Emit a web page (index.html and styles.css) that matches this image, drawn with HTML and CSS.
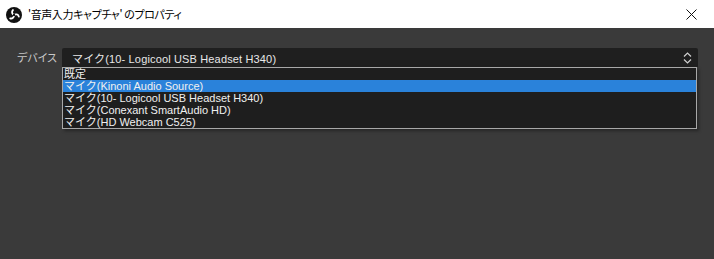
FILE: index.html
```html
<!DOCTYPE html>
<html lang="ja">
<head>
<meta charset="utf-8">
<link rel="stylesheet" href="styles.css">
</head>
<body>
<div class="window">
  <div class="titlebar">
    <svg class="logo" width="16" height="16" viewBox="0 0 16 16">
      <circle cx="8" cy="8" r="8" fill="#111"/>
      <g fill="none" stroke="#fff" stroke-width="1.8" stroke-linecap="round">
        <path d="M8 8 A3 3 0 0 1 7 3"/>
        <path d="M8 8 A3 3 0 0 1 7 3" transform="rotate(120 8 8)"/>
        <path d="M8 8 A3 3 0 0 1 7 3" transform="rotate(240 8 8)"/>
      </g>
      <circle cx="8" cy="8" r="1.2" fill="#111"/>
    </svg>
    <span class="title">'音声入力キャプチャ' のプロパティ</span>
    <span class="close">
      <svg width="11" height="11" viewBox="0 0 11 11"><path d="M0.5 0.5 L10.5 10.5 M10.5 0.5 L0.5 10.5" stroke="#111" stroke-width="1"/></svg>
    </span>
  </div>
  <div class="content">
    <div class="row">
      <span class="label">デバイス</span>
      <div class="combo-wrap">
        <div class="combo">
          <span class="combo-text">マイク(10- Logicool USB Headset H340)</span>
          <svg class="arrows" width="9" height="12" viewBox="0 0 9 12"><path d="M1 4.5 L4.5 1 L8 4.5 M1 7.5 L4.5 11 L8 7.5" fill="none" stroke="#d0d0d0" stroke-width="1.2"/></svg>
        </div>
        <ul class="list">
          <li>既定</li>
          <li class="sel">マイク(Kinoni Audio Source)</li>
          <li>マイク(10- Logicool USB Headset H340)</li>
          <li>マイク(Conexant SmartAudio HD)</li>
          <li>マイク(HD Webcam C525)</li>
        </ul>
      </div>
    </div>
  </div>
</div>
</body>
</html>
```

FILE: styles.css
```css
html, body {
  margin: 0;
  padding: 0;
  height: 100%;
}
body {
  background: #3a3a3a;
  font-family: "Liberation Sans", "Noto Sans CJK JP", sans-serif;
  overflow: hidden;
}
.window {
  display: flex;
  flex-direction: column;
  height: 100%;
}
.titlebar {
  height: 28px;
  background: #ffffff;
  display: flex;
  align-items: center;
  padding-left: 6px;
  box-sizing: border-box;
  flex: none;
}
.logo {
  flex: none;
  margin-top: 1px;
}
.title {
  margin-left: 6px;
  font-family: "Noto Sans CJK JP", sans-serif;
  font-feature-settings: "palt" 1;
  font-size: 11px;
  letter-spacing: -0.4px;
  color: #000;
  white-space: nowrap;
}
.close {
  margin-left: auto;
  width: 46px;
  display: flex;
  justify-content: center;
  align-items: center;
  margin-top: 1px;
}
.content {
  flex: 1;
  background: #3a3a3a;
  padding: 20px 16px 0 17px;
}
.row {
  display: flex;
  align-items: flex-start;
}
.label {
  color: #c8c8c8;
  font-family: "Noto Sans CJK JP", sans-serif;
  font-feature-settings: "palt" 1;
  font-size: 11px;
  line-height: 19px;
  width: 45px;
  flex: none;
  white-space: nowrap;
}
.combo-wrap {
  flex: 1;
  display: flex;
  flex-direction: column;
}
.combo {
  height: 19px;
  background: #1f1f1f;
  border-radius: 2px 2px 0 0;
  display: flex;
  align-items: center;
  padding-left: 10px;
  padding-right: 6px;
}
.combo-text {
  color: #e8e8e8;
  font-size: 11px;
  letter-spacing: 0.15px;
  flex: 1;
  white-space: nowrap;
}
.arrows {
  flex: none;
}
.list {
  margin: 0;
  padding: 0;
  list-style: none;
  background: #1e1e1e;
  border: 1px solid #a8a8a8;
  box-shadow: 2px 2px 3px rgba(0,0,0,0.35);
  margin-right: 1px;
}
.list li {
  height: 12px;
  line-height: 12px;
  font-size: 11px;
  color: #f0f0f0;
  padding-left: 1px;
  white-space: nowrap;
}
.list li.sel {
  background: #2a82da;
}
```
